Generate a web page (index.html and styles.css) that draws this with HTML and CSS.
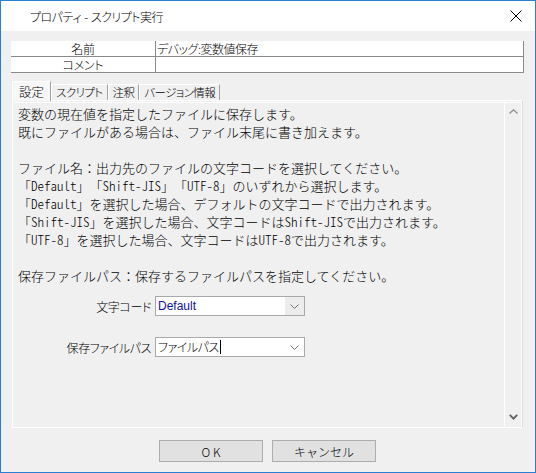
FILE: index.html
```html
<!DOCTYPE html>
<html lang="ja">
<head>
<meta charset="utf-8">
<link rel="stylesheet" href="styles.css">
</head>
<body>
<div class="window">
  <div class="titlebar">
    <span class="title">プロパティ - スクリプト実行</span>
    <span class="close"><svg width="12" height="12" viewBox="0 0 12 12"><path d="M0.5 0.5L11.5 11.5M11.5 0.5L0.5 11.5" stroke="#000" stroke-width="1" fill="none"/></svg></span>
  </div>
  <div class="content">
    <div class="props">
      <div class="row"><div class="key">名前</div><div class="val">デバッグ:変数値保存</div></div>
      <div class="row"><div class="key">コメント</div><div class="val"></div></div>
    </div>
    <div class="tabs">
      <div class="tab active">設定</div>
      <div class="tab">スクリプト</div>
      <div class="tab">注釈</div>
      <div class="tab">バージョン情報</div>
    </div>
    <div class="panel">
      <div class="textarea">
        <div class="text-body">
          <div class="desc">
            <div class="line">変数の現在値を指定したファイルに保存します。</div>
            <div class="line">既にファイルがある場合は、ファイル末尾に書き加えます。</div>
            <div class="line">&nbsp;</div>
            <div class="line">ファイル名：出力先のファイルの文字コードを選択してください。</div>
            <div class="line">「<span class="hw">Default</span>」「<span class="hw">Shift-JIS</span>」「<span class="hw">UTF-8</span>」のいずれから選択します。</div>
            <div class="line">「<span class="hw">Default</span>」を選択した場合、デフォルトの文字コードで出力されます。</div>
            <div class="line">「<span class="hw">Shift-JIS</span>」を選択した場合、文字コードは<span class="hw">Shift-JIS</span>で出力されます。</div>
            <div class="line">「<span class="hw">UTF-8</span>」を選択した場合、文字コードは<span class="hw">UTF-8</span>で出力されます。</div>
            <div class="line">&nbsp;</div>
            <div class="line">保存ファイルパス：保存するファイルパスを指定してください。</div>
          </div>
          <div class="form">
            <div class="label">文字コード</div>
            <div class="combo combo-list">
              <span class="combo-value selected">Default</span>
              <span class="combo-btn"><svg width="9" height="5" viewBox="0 0 9 5"><path d="M0.5 0.5L4.5 4.5L8.5 0.5" fill="none" stroke="#707070"/></svg></span>
            </div>
            <div class="label">保存ファイルパス</div>
            <div class="combo combo-edit">
              <span class="combo-value">ファイルパス<span class="caret"></span></span>
              <span class="combo-btn"><svg width="9" height="5" viewBox="0 0 9 5"><path d="M0.5 0.5L4.5 4.5L8.5 0.5" fill="none" stroke="#707070"/></svg></span>
            </div>
          </div>
        </div>
        <div class="scrollbar">
          <span class="sb-arrow"><svg width="9" height="5" viewBox="0 0 9 5"><path d="M0.5 4.5L4.5 0.8L8.5 4.5" fill="none" stroke="#8a8a8a" stroke-width="1.2"/></svg></span>
          <span class="sb-arrow"><svg width="9" height="6" viewBox="0 0 9 6"><path d="M0.8 0.8L4.5 4.6L8.2 0.8" fill="none" stroke="#606060" stroke-width="1.8"/></svg></span>
        </div>
      </div>
    </div>
    <div class="buttons">
      <button class="btn btn-ok">OK</button>
      <button class="btn">キャンセル</button>
    </div>
  </div>
</div>
</body>
</html>
```

FILE: styles.css
```css
html, body {
  margin: 0;
  padding: 0;
  background: #ffffff;
}

.window {
  width: 536px;
  height: 473px;
  box-sizing: border-box;
  border: 1px solid #2b7fd3;
  display: flex;
  flex-direction: column;
  font-family: "Noto Sans CJK JP", "Noto Sans", sans-serif;
  font-size: 12px;
  font-weight: 300;
  color: #000;
  font-feature-settings: "palt" 1;
  text-spacing-trim: space-all;
}

.titlebar {
  height: 30px;
  flex: none;
  background: #ffffff;
  display: flex;
  align-items: center;
  justify-content: space-between;
  padding: 0 13px 0 29px;
}

.title {
  font-size: 12px;
  letter-spacing: -0.5px;
  word-spacing: 1px;
  color: #000;
}

.close {
  display: flex;
  width: 12px;
  height: 12px;
}

.content {
  flex: 1;
  background: #f0f0f0;
  padding: 10px 11px 0 10px;
  display: flex;
  flex-direction: column;
}

.props {
  flex: none;
  border-right: 1px solid #8a8a8a;
  background: #ffffff;
}

.row {
  display: flex;
  height: 15px;
  border-bottom: 1px solid #8a8a8a;
}

.key {
  width: 144px;
  flex: none;
  border-right: 1px solid #8a8a8a;
  text-align: center;
  line-height: 15px;
  letter-spacing: -0.3px;
}

.val {
  flex: 1;
  padding-left: 1px;
  line-height: 15px;
  letter-spacing: -0.5px;
}

.tabs {
  flex: none;
  margin-top: 8px;
  margin-left: 1px;
  height: 19px;
  display: flex;
  align-items: flex-end;
  position: relative;
  z-index: 1;
}

.tab {
  height: 15px;
  line-height: 15px;
  padding: 0 4px 0 4px;
  border-top: 1px solid #ffffff;
  border-left: 1px solid #ffffff;
  border-right: 1px solid #a0a0a0;
  background: #f0f0f0;
  font-size: 11.5px;
  letter-spacing: -0.6px;
}

.tab.active {
  height: 19px;
  line-height: 19px;
  padding: 0 6px 0 6px;
  margin-bottom: -1px;
  background: #f7f7f7;
  font-size: 12.5px;
  letter-spacing: 0;
}

.panel {
  flex: none;
  height: 328px;
  margin-left: 1px;
  margin-right: 1px;
  box-sizing: border-box;
  border-top: 1px solid #ffffff;
  border-left: 1px solid #ffffff;
  border-right: 1px solid #dcdcdc;
  border-bottom: 1px solid #ffffff;
  padding: 1px 0 1px 1px;
  display: flex;
}

.textarea {
  flex: 1;
  display: flex;
  border-top: 1px solid #ffffff;
  border-right: 1px solid #ffffff;
}

.text-body {
  flex: 1;
  padding: 2px 0 0 4px;
}

.desc {
  font-size: 13px;
  line-height: 18px;
  font-feature-settings: normal;
  white-space: nowrap;
}

.hw {
  font-feature-settings: "hwid" 1;
}

.form {
  margin-top: 11px;
  display: grid;
  grid-template-columns: 133px 150px;
  column-gap: 4px;
  row-gap: 21px;
  align-items: center;
}

.label {
  text-align: right;
  font-size: 12px;
  letter-spacing: -0.4px;
}

.combo {
  height: 20px;
  box-sizing: border-box;
  border: 1px solid #a9a9a9;
  background: #ffffff;
  display: flex;
  align-items: center;
}

.combo-value {
  flex: 1;
  padding-left: 2px;
  line-height: 18px;
  display: flex;
  align-items: center;
  letter-spacing: -0.5px;
}

.combo-value.selected {
  font-family: "Liberation Sans", "Noto Sans", sans-serif;
  font-weight: 400;
  font-size: 12px;
  color: #10139a;
  letter-spacing: 0;
}

.caret {
  display: inline-block;
  width: 1px;
  height: 14px;
  background: #000;
  margin-left: 1px;
}

.combo-btn {
  width: 19px;
  height: 18px;
  display: flex;
  align-items: center;
  justify-content: center;
}

.combo-list .combo-btn {
  background: #ececec;
}

.scrollbar {
  width: 16px;
  flex: none;
  border-left: 1px solid #ffffff;
  display: flex;
  flex-direction: column;
  justify-content: space-between;
  align-items: center;
  padding: 6px 0 6px 0;
}

.sb-arrow {
  display: flex;
}

.buttons {
  flex: 1;
  display: flex;
  justify-content: center;
  align-items: flex-start;
  gap: 9px;
  padding-top: 12px;
}

.btn {
  width: 104px;
  height: 22px;
  box-sizing: border-box;
  border: 1px solid #adadad;
  background: #e1e1e1;
  font-family: "Noto Sans CJK JP", "Noto Sans", sans-serif;
  font-size: 12px;
  font-weight: 300;
  color: #000;
  padding: 0;
  margin: 0;
}

.btn-ok {
  letter-spacing: 3px;
  text-indent: 3px;
}
```
